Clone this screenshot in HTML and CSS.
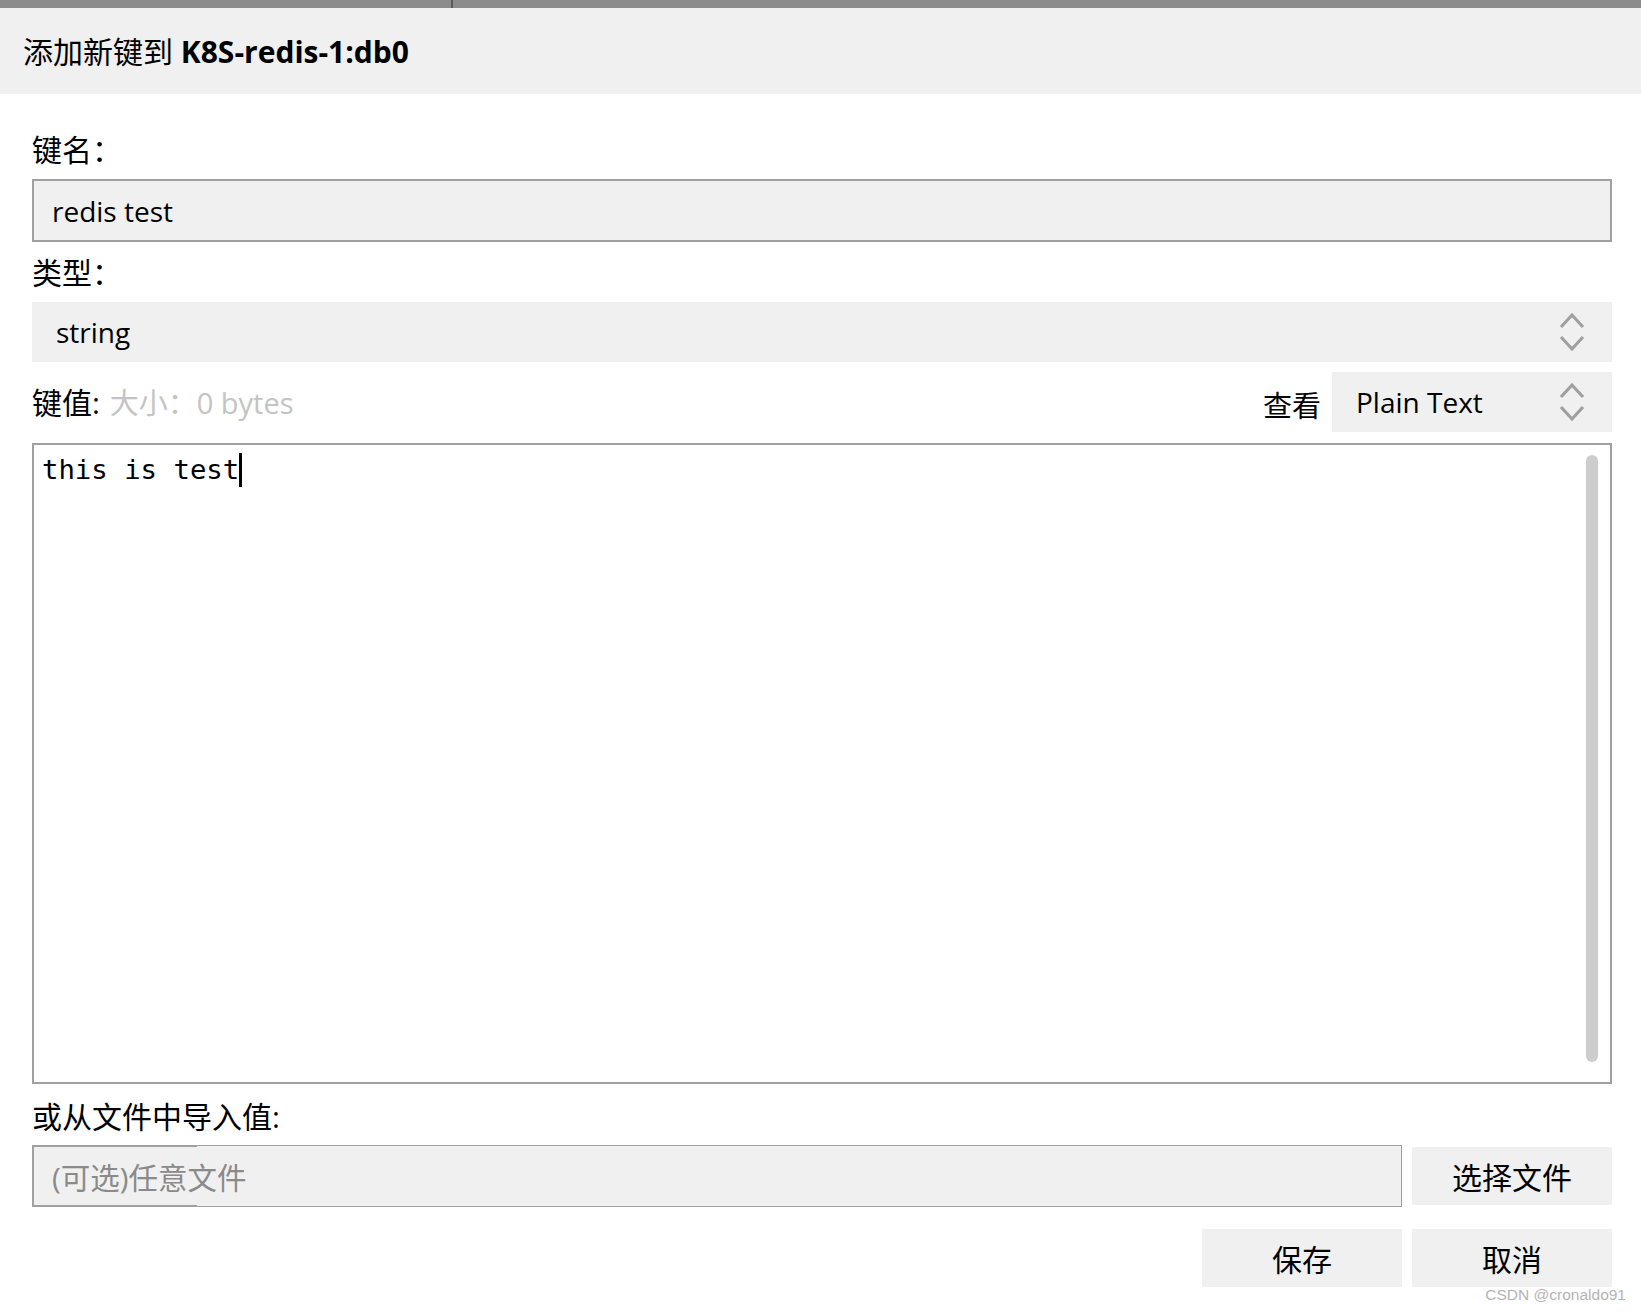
FILE: index.html
```html
<!DOCTYPE html>
<html lang="zh-CN">
<head>
<meta charset="utf-8">
<title>添加新键</title>
<link rel="stylesheet" href="styles.css">
</head>
<body>
<div class="topbar"><span class="tab-sep"></span></div>
<header class="title-bar">
  <h1 class="title">添加新键到 <b class="conn">K8S-redis-1:db0</b></h1>
</header>
<main class="form">
  <div class="label">键名：</div>
  <div class="field key-input">redis test</div>

  <div class="label label-gap">类型：</div>
  <div class="select type-select">
    <span class="select-text">string</span>
    <svg class="chev" width="26" height="40" viewBox="0 0 26 40"><path d="M2 15 L13 3 L24 15 M2 25 L13 37 L24 25" fill="none" stroke="#a0a0a0" stroke-width="3.2"/></svg>
  </div>

  <div class="value-row">
    <div class="value-label">键值: <span class="size">大小：0 bytes</span></div>
    <div class="view-label">查看</div>
    <div class="select view-select">
      <span class="select-text">Plain Text</span>
      <svg class="chev" width="26" height="40" viewBox="0 0 26 40"><path d="M2 15 L13 3 L24 15 M2 25 L13 37 L24 25" fill="none" stroke="#a0a0a0" stroke-width="3.2"/></svg>
    </div>
  </div>

  <div class="editor">
    <div class="editor-text">this is test<span class="caret"></span></div>
    <div class="scroll-track"><div class="scroll-thumb"></div></div>
  </div>

  <div class="label import-label">或从文件中导入值:</div>
  <div class="file-row">
    <div class="field file-input"><span class="placeholder">(可选)任意文件</span></div>
    <button class="btn">选择文件</button>
  </div>
  <div class="actions">
    <button class="btn">保存</button>
    <button class="btn">取消</button>
  </div>
</main>
<div class="watermark">CSDN @cronaldo91</div>
</body>
</html>
```
FILE: styles.css
```css
*, *::before, *::after { box-sizing: border-box; }
html, body { margin: 0; padding: 0; background: #ffffff; }
body {
  width: 1641px;
  height: 1312px;
  position: relative;
  overflow: hidden;
  font-family: "Open Sans", "Noto Sans CJK SC", sans-serif;
  color: #000;
}
.topbar {
  height: 8px;
  background: #8c8c8c;
  position: relative;
}
.tab-sep {
  position: absolute;
  left: 451px;
  top: 0;
  width: 2px;
  height: 8px;
  background: #5a5a5a;
}
.title-bar {
  height: 86px;
  background: #f0f0f0;
  display: flex;
  align-items: center;
  padding-left: 23px;
}
.title {
  margin: 0;
  font-size: 30px;
  font-weight: 400;
  line-height: 38px;
  padding-top: 2px;
}
.conn { font-weight: 700; }

.form {
  padding: 38px 29px 0 32px;
  display: flex;
  flex-direction: column;
}
.label {
  font-size: 30px;
  line-height: 36px;
  height: 36px;
}
.field {
  background: #f0f0f0;
  border: 2px solid #a0a0a0;
  font-size: 28px;
  display: flex;
  align-items: center;
  padding-left: 18px;
}
.key-input {
  margin-top: 11px;
  height: 63px;
}
.label-gap { margin-top: 13px; }
.select {
  background: #f0f0f0;
  display: flex;
  align-items: center;
  justify-content: space-between;
  font-size: 28px;
}
.type-select {
  margin-top: 11px;
  height: 60px;
  padding: 0 27px 0 24px;
}
.chev { display: block; }

.value-row {
  margin-top: 10px;
  height: 60px;
  display: flex;
  align-items: center;
}
.value-label {
  flex: 1;
  font-size: 30px;
  line-height: 36px;
  padding-top: 2px;
}
.size { color: #c4c4c4; margin-left: 2px; font-size: 29px; }
.view-label {
  font-size: 29px;
  margin-right: 11px;
  padding-top: 4px;
}
.view-select {
  width: 280px;
  height: 60px;
  padding: 0 27px 0 24px;
}

.editor {
  margin-top: 11px;
  height: 641px;
  border: 2px solid #a0a0a0;
  display: flex;
  padding: 8px 12px 20px 8px;
}
.editor-text {
  flex: 1;
  font-family: "DejaVu Sans Mono", "Liberation Mono", monospace;
  font-size: 27.3px;
  line-height: 34px;
  height: 34px;
  display: flex;
  align-items: center;
  white-space: pre;
}
.caret {
  display: inline-block;
  width: 3px;
  height: 34px;
  background: #000;
}
.scroll-track {
  width: 12px;
  padding-top: 2px;
  display: flex;
}
.scroll-thumb {
  flex: 1;
  background: #cdcdcd;
  border-radius: 6px;
}

.import-label { margin-top: 15px; }
.file-row {
  margin-top: 10px;
  display: flex;
  align-items: center;
  gap: 10px;
}
.file-input {
  flex: 1;
  height: 62px;
  border-width: 1px;
  position: relative;
  padding-left: 19px;
  font-size: 29.5px;
}
.file-input::before {
  content: "";
  position: absolute;
  left: -1px;
  top: -1px;
  width: 165px;
  height: 62px;
  border: 2px solid #a0a0a0;
  border-right: none;
}
.placeholder { color: #8a8a8a; }
.btn {
  width: 200px;
  height: 58px;
  background: #f0f0f0;
  border: none;
  padding: 0;
  font-family: "Open Sans", "Noto Sans CJK SC", sans-serif;
  font-size: 30px;
  color: #000;
}
.actions {
  margin-top: 22px;
  display: flex;
  justify-content: flex-end;
  gap: 10px;
}
.watermark {
  position: absolute;
  right: 15px;
  top: 1286px;
  font-family: "Liberation Sans", Arial, sans-serif;
  font-size: 15.5px;
  color: #b4b4b4;
}
```
